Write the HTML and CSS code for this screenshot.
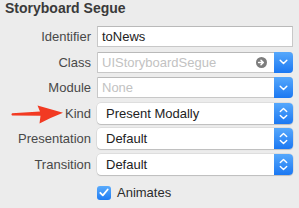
FILE: index.html
```html
<!DOCTYPE html>
<html lang="en">
<head>
    <meta charset="UTF-8">
    <title>Storyboard Segue</title>
    <link rel="stylesheet" href="styles.css">
</head>
<body>
    <div class="inspector">
        <div class="section-title">Storyboard Segue</div>

        <div class="form">
            <label class="label">Identifier</label>
            <div class="field text-field"><span class="value">toNews</span></div>

            <label class="label">Class</label>
            <div class="field text-field combo">
                <span class="value placeholder">UIStoryboardSegue</span>
                <span class="goto">
                    <svg width="11" height="11" viewBox="0 0 11 11">
                        <circle cx="5.5" cy="5.5" r="5.5" fill="#7d7d7d"/>
                        <path d="M2.6 5.5h4.2M5 3.2l2.3 2.3L5 7.8" fill="none" stroke="#fff" stroke-width="1.5" stroke-linecap="round" stroke-linejoin="round"/>
                    </svg>
                </span>
                <span class="blue-btn">
                    <svg width="9" height="6" viewBox="0 0 9 6"><path d="M1.2 1.3l3.3 3.2 3.3-3.2" fill="none" stroke="#fff" stroke-width="1.5" stroke-linecap="round" stroke-linejoin="round"/></svg>
                </span>
            </div>

            <label class="label">Module</label>
            <div class="field text-field combo">
                <span class="value placeholder">None</span>
                <span class="blue-btn">
                    <svg width="9" height="6" viewBox="0 0 9 6"><path d="M1.2 1.3l3.3 3.2 3.3-3.2" fill="none" stroke="#fff" stroke-width="1.5" stroke-linecap="round" stroke-linejoin="round"/></svg>
                </span>
            </div>

            <label class="label">Kind</label>
            <div class="field popup">
                <span class="value">Present Modally</span>
                <span class="blue-btn">
                    <svg width="9" height="13" viewBox="0 0 9 13"><path d="M1.3 4.6l3.2-3.1 3.2 3.1M1.3 8.4l3.2 3.1 3.2-3.1" fill="none" stroke="#fff" stroke-width="1.4" stroke-linecap="round" stroke-linejoin="round"/></svg>
                </span>
            </div>

            <label class="label">Presentation</label>
            <div class="field popup">
                <span class="value">Default</span>
                <span class="blue-btn">
                    <svg width="9" height="13" viewBox="0 0 9 13"><path d="M1.3 4.6l3.2-3.1 3.2 3.1M1.3 8.4l3.2 3.1 3.2-3.1" fill="none" stroke="#fff" stroke-width="1.4" stroke-linecap="round" stroke-linejoin="round"/></svg>
                </span>
            </div>

            <label class="label">Transition</label>
            <div class="field popup">
                <span class="value">Default</span>
                <span class="blue-btn">
                    <svg width="9" height="13" viewBox="0 0 9 13"><path d="M1.3 4.6l3.2-3.1 3.2 3.1M1.3 8.4l3.2 3.1 3.2-3.1" fill="none" stroke="#fff" stroke-width="1.4" stroke-linecap="round" stroke-linejoin="round"/></svg>
                </span>
            </div>

            <span></span>
            <div class="check-row">
                <span class="checkbox">
                    <svg width="10" height="9" viewBox="0 0 10 9"><path d="M1.3 4.8l2.5 2.6L8.7 1.5" fill="none" stroke="#fff" stroke-width="1.8" stroke-linecap="round" stroke-linejoin="round"/></svg>
                </span>
                <span class="check-label">Animates</span>
            </div>
        </div>

        <!-- annotation arrow pointing at Kind -->
        <svg class="pointer" width="70" height="30" viewBox="0 0 70 30">
            <path d="M12 17.2 L40 15.4 L37.5 9.5 Q50 13 63 16.8 Q51 21.5 39.5 27.5 L40.5 19.8 L12 19.6 Q10.8 18.4 12 17.2 Z" fill="#f23a22"/>
        </svg>
    </div>
</body>
</html>
```

FILE: styles.css
```css
body {
  margin: 0;
  padding: 0;
  background-color: #ececec;
  font-family: "Liberation Sans", Arial, sans-serif;
  font-size: 13px;
  color: #2b2b2b;
}

.inspector {
  position: relative;
  width: 299px;
  height: 208px;
  overflow: hidden;
}

.section-title {
  font-weight: bold;
  font-size: 14px;
  line-height: 16px;
  padding: 0 5px;
  color: #3a3a3a;
}

/* form grid */

.form {
  display: grid;
  grid-template-columns: 91px 1fr;
  grid-auto-rows: 21px;
  column-gap: 6px;
  row-gap: 4.6px;
  margin-top: 10px;
  padding-right: 6px;
}

.label {
  text-align: right;
  line-height: 21px;
  color: #484848;
  white-space: nowrap;
}

.field {
  display: flex;
  align-items: center;
  box-sizing: border-box;
  background-color: #fff;
  min-width: 0;
}

.value {
  flex: 1;
  white-space: nowrap;
  overflow: hidden;
  color: #222;
}

.placeholder {
  color: #c2c2c2;
}

/* text fields */

.text-field {
  border: 1px solid #c8c8c8;
  border-top-color: #b9b9b9;
}

.text-field .value {
  padding-left: 4px;
}

.combo {
  border-right: none;
  border-radius: 0 4px 4px 0;
}

.goto {
  display: flex;
  margin-right: 7px;
}

.blue-btn {
  display: flex;
  align-items: center;
  justify-content: center;
  width: 19px;
  align-self: stretch;
  background: linear-gradient(#56a8fc, #1b78f2);
  border-radius: 0 4px 4px 0;
}

.combo .blue-btn {
  margin: -1px 0;
}

/* popup buttons */

.popup {
  border-radius: 4px;
  box-shadow: 0 0 0 0.5px rgba(0, 0, 0, 0.12), 0 1px 1px rgba(0, 0, 0, 0.15);
}

.popup .value {
  padding-left: 9px;
}

/* checkbox */

.check-row {
  display: flex;
  align-items: center;
  gap: 6px;
  margin-top: 5px;
}

.checkbox {
  display: flex;
  align-items: center;
  justify-content: center;
  width: 14px;
  height: 14px;
  border-radius: 3px;
  background: linear-gradient(#5aabfc, #1f7cf3);
}

.check-label {
  color: #2b2b2b;
}

.pointer {
  position: absolute;
  left: 0;
  top: 96px;
}
```
